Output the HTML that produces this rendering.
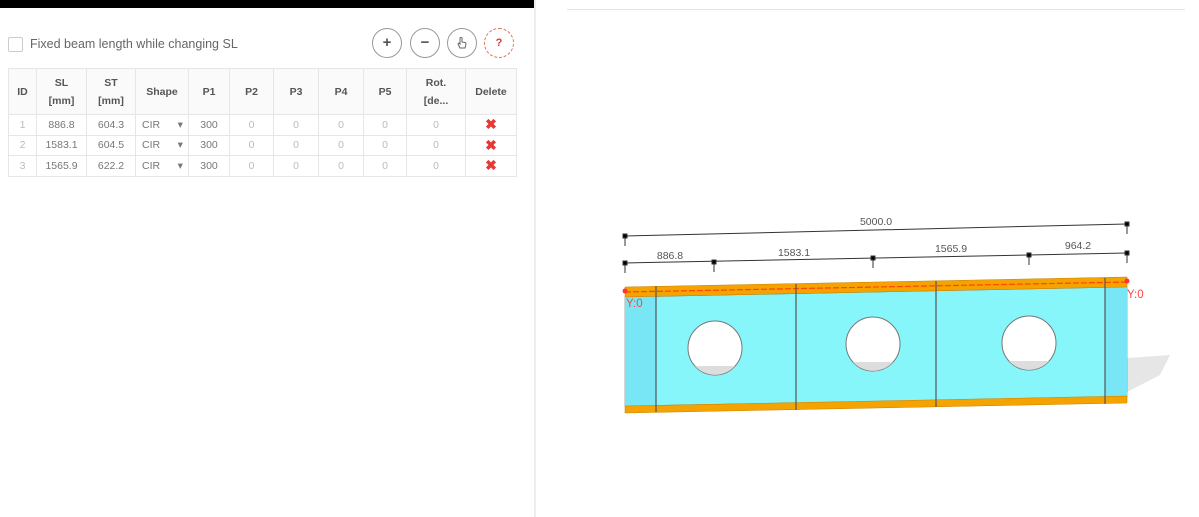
<!DOCTYPE html>
<html><head><meta charset="utf-8"><style>
body{margin:0;width:1199px;height:517px;background:#fff;font-family:"Liberation Sans",sans-serif;position:relative;overflow:hidden}
.bar{position:absolute;left:0;top:0;width:534px;height:8px;background:#000}
.div{position:absolute;left:534px;top:0;width:2px;height:517px;background:#eee}
.hl{position:absolute;left:567px;top:9px;width:618px;height:1px;background:#e4e4e4}
.cb{position:absolute;left:8px;top:37px;width:13px;height:13px;border:1px solid #ccc;border-radius:2px}
.lbl{position:absolute;left:30px;top:37px;font-size:12.5px;color:#666}
.btn{position:absolute;top:28px;width:28px;height:28px;border:1px solid #999;border-radius:50%;text-align:center;line-height:28px;font-weight:bold;color:#555;font-size:15px}
table{position:absolute;left:8px;top:68px;border-collapse:collapse;font-size:10.5px;color:#777;border:1px solid #e0e0e0;border-radius:3px}
td,th{border:1px solid #e6e6e6;text-align:center;padding:0}
th{height:45px;font-weight:bold;color:#555;font-size:10.5px;line-height:18px;background:#fafafa}
td{height:19.5px}
.g{color:#bbb}.x{color:#e53935;font-size:14px;font-weight:bold}
</style></head><body>
<div class="bar"></div><div class="div"></div><div class="hl"></div>
<div class="cb"></div><div class="lbl">Fixed beam length while changing SL</div>
<div class="btn" style="left:372px">+</div>
<div class="btn" style="left:410px">−</div>
<div class="btn" style="left:447px"><svg width="14" height="14" viewBox="0 0 14 14" style="margin-top:7px"><path d="M5,12 L3,8 L4,7 L5,8 L5,2 Q6,1 7,2 L7,6 L10,6.5 Q11,7 11,8 L10,12 Z" fill="none" stroke="#666" stroke-width="1"/></svg></div>
<div class="btn" style="left:484px;border:1px dashed #e57050;color:#d33;font-size:11px">?</div>
<table>
<tr><th style="width:27px">ID</th><th style="width:49px">SL<br>[mm]</th><th style="width:48px">ST<br>[mm]</th><th style="width:52px">Shape</th><th style="width:40px">P1</th><th style="width:43px">P2</th><th style="width:44px">P3</th><th style="width:44px">P4</th><th style="width:42px">P5</th><th style="width:58px">Rot.<br>[de...</th><th style="width:50px">Delete</th></tr>
<tr><td class="g">1</td><td>886.8</td><td>604.3</td><td style="text-align:left;padding-left:6px">CIR &nbsp; &nbsp; &nbsp;▾</td><td>300</td><td class="g">0</td><td class="g">0</td><td class="g">0</td><td class="g">0</td><td class="g">0</td><td class="x">✖</td></tr>
<tr><td class="g">2</td><td>1583.1</td><td>604.5</td><td style="text-align:left;padding-left:6px">CIR &nbsp; &nbsp; &nbsp;▾</td><td>300</td><td class="g">0</td><td class="g">0</td><td class="g">0</td><td class="g">0</td><td class="g">0</td><td class="x">✖</td></tr>
<tr><td class="g">3</td><td>1565.9</td><td>622.2</td><td style="text-align:left;padding-left:6px">CIR &nbsp; &nbsp; &nbsp;▾</td><td>300</td><td class="g">0</td><td class="g">0</td><td class="g">0</td><td class="g">0</td><td class="g">0</td><td class="x">✖</td></tr>
</table>
<svg style="position:absolute;left:0;top:0" width="1199" height="517">
<polygon points="1127,358 1170,355 1160,375 1127,392" fill="#e6e6e6"/>
<polygon points="625,297 1127,287 1127,397 625,406" fill="#86f6fa" stroke="#777" stroke-width="0.6"/>
<polygon points="625,297 656,296 656,406 625,406" fill="#78e6f4"/>
<polygon points="1105,288 1127,287 1127,397 1105,397" fill="#78e6f4"/>
<polygon points="625,287 1127,277 1127,287 625,297" fill="#f5a300" stroke="#c88000" stroke-width="0.5"/>
<line x1="625" y1="292" x2="1127" y2="282" stroke="#ff4500" stroke-width="1.2" stroke-dasharray="6,2"/>
<polygon points="625,406 1127,396 1127,403 625,413" fill="#f5a300" stroke="#c88000" stroke-width="0.5"/>
<g stroke="#555" stroke-width="1.2">
<line x1="656" y1="286" x2="656" y2="412"/><line x1="796" y1="284" x2="796" y2="410"/><line x1="936" y1="281" x2="936" y2="407"/><line x1="1105" y1="278" x2="1105" y2="404"/></g>
<g fill="#fff" stroke="#777"><circle cx="715" cy="348" r="27"/><circle cx="873" cy="344" r="27"/><circle cx="1029" cy="343" r="27"/></g>
<g fill="#ddd"><path d="M735,366 L695,366 A27,27 0 0 0 735,366Z"/><path d="M893,362 L853,362 A27,27 0 0 0 893,362Z"/><path d="M1049,361 L1009,361 A27,27 0 0 0 1049,361Z"/></g>
<g stroke="#333" stroke-width="1" fill="#000">
<line x1="625" y1="236" x2="1127" y2="224"/><line x1="625" y1="236" x2="625" y2="246"/><line x1="1127" y1="224" x2="1127" y2="234"/>
<line x1="625" y1="263" x2="1127" y2="253"/>
<line x1="625" y1="263" x2="625" y2="273"/><line x1="714" y1="262" x2="714" y2="272"/><line x1="873" y1="258" x2="873" y2="268"/><line x1="1029" y1="255" x2="1029" y2="265"/><line x1="1127" y1="253" x2="1127" y2="263"/>
<rect x="623" y="234" width="4" height="4"/><rect x="1125" y="222" width="4" height="4"/><rect x="623" y="261" width="4" height="4"/><rect x="712" y="260" width="4" height="4"/><rect x="871" y="256" width="4" height="4"/><rect x="1027" y="253" width="4" height="4"/><rect x="1125" y="251" width="4" height="4"/></g>
<g font-size="10.5" fill="#555" font-family="Liberation Sans,sans-serif" text-anchor="middle">
<text x="876" y="225">5000.0</text><text x="670" y="259">886.8</text><text x="794" y="256">1583.1</text><text x="951" y="252">1565.9</text><text x="1078" y="249">964.2</text></g>
<g fill="#f44" font-size="11.5" font-family="Liberation Sans,sans-serif"><text x="626" y="307">Y:0</text><text x="1127" y="298">Y:0</text></g>
<circle cx="625" cy="291" r="2.5" fill="#f33"/><circle cx="1127" cy="281" r="2.5" fill="#f33"/>
</svg>
</body></html>
